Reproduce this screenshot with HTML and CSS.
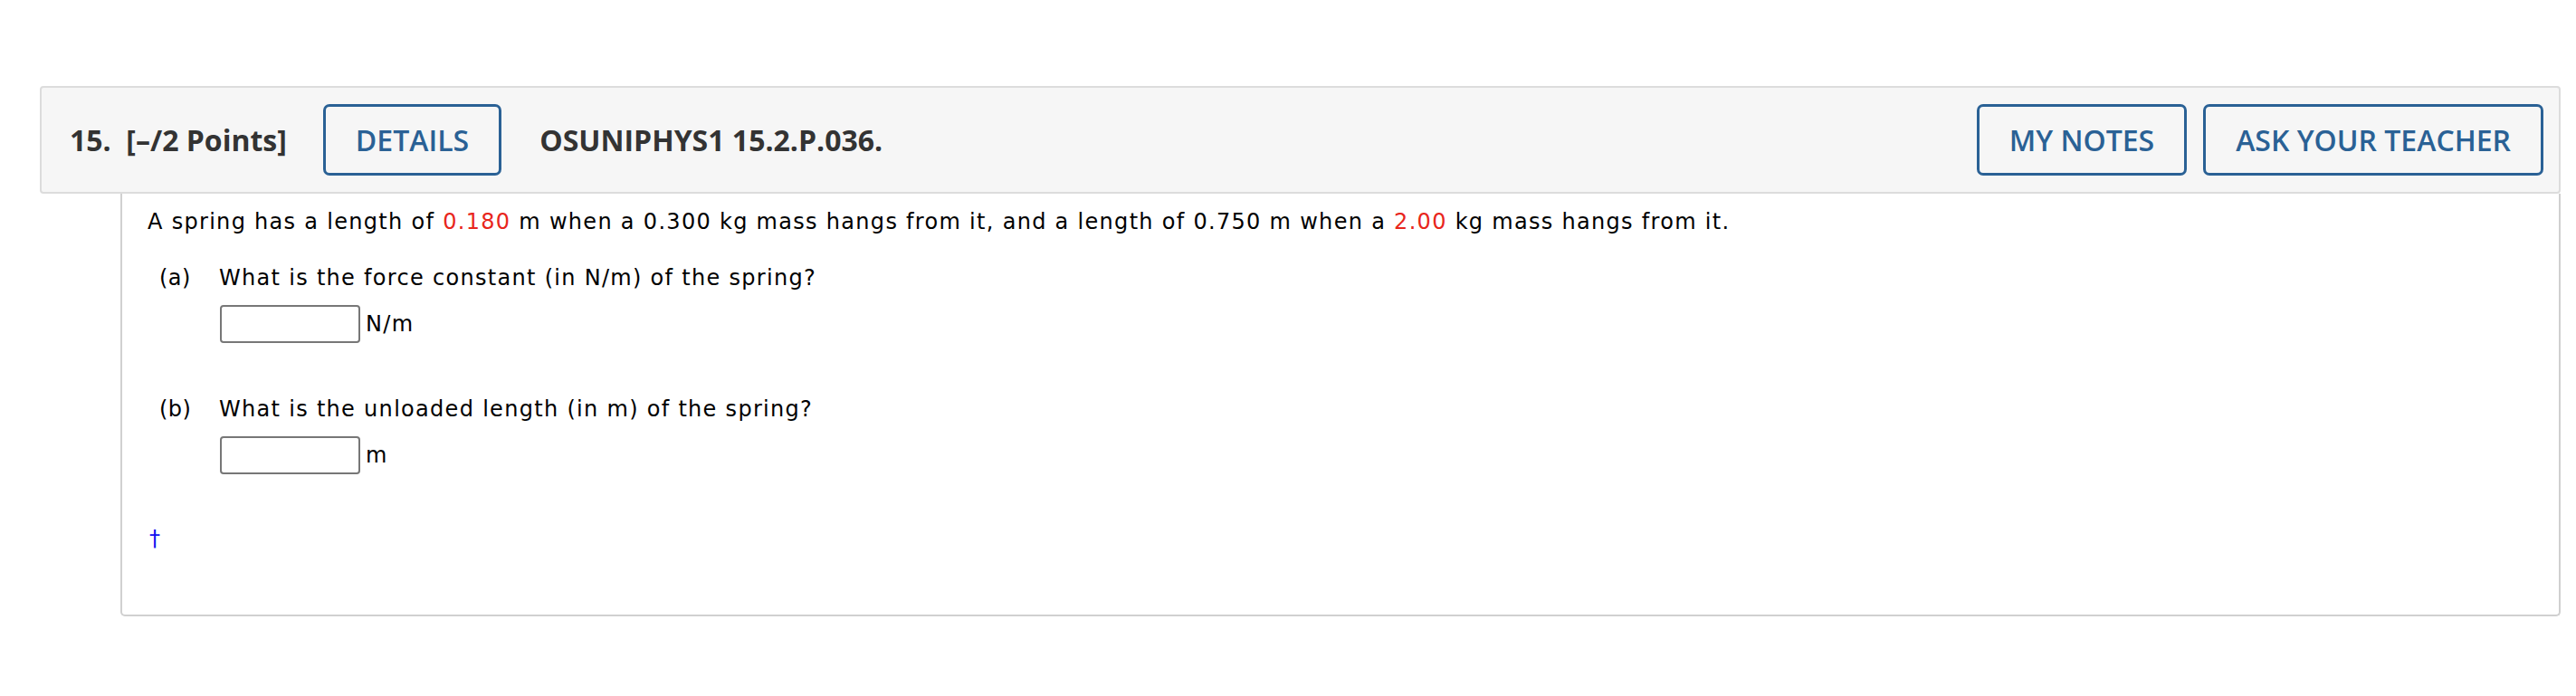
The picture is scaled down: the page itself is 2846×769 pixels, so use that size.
FILE: index.html
```html
<!DOCTYPE html>
<html>
<head>
<meta charset="utf-8">
<link rel="stylesheet" href="styles.css">
</head>
<body>
<div class="page">
  <div class="qhead">
    <div class="qnum">15.&nbsp; [–/2 Points]</div>
    <button class="btn">DETAILS</button>
    <div class="qid">OSUNIPHYS1 15.2.P.036.</div>
    <div class="spacer"></div>
    <button class="btn">MY NOTES</button>
    <button class="btn">ASK YOUR TEACHER</button>
  </div>
  <div class="qbody">
    <p class="stem">A spring has a length of <span class="red">0.180</span> m when a 0.300 kg mass hangs from it, and a length of 0.750 m when a <span class="red">2.00</span> kg mass hangs from it.</p>
    <div class="part">
      <div class="qline"><span class="lbl">(a)</span><span>What is the force constant (in N/m) of the spring?</span></div>
      <div class="ans"><span class="box"></span><span class="unit">N/m</span></div>
    </div>
    <div class="part partb">
      <div class="qline"><span class="lbl">(b)</span><span>What is the unloaded length (in m) of the spring?</span></div>
      <div class="ans"><span class="box"></span><span class="unit">m</span></div>
    </div>
    <div class="dagger">†</div>
  </div>
</div>
</body>
</html>
```
FILE: styles.css
```css
html, body { margin: 0; padding: 0; background: #fff; }
.page { padding: 95px 17px 0 44px; }
.qhead {
  box-sizing: border-box;
  height: 119px;
  background: #f6f6f6;
  border: 2px solid #dcdcdc;
  border-radius: 4px;
  display: flex;
  align-items: center;
  padding: 0 17px 0 31px;
  font-family: "Open Sans", sans-serif;
  font-size: 32px;
  font-weight: 700;
  color: #333;
}
.qnum { margin-right: 40px; }
.qid { margin-left: 42px; }
.spacer { flex: 1; }
.btn {
  box-sizing: border-box;
  height: 79px;
  padding: 0 33px;
  background: transparent;
  border: 3.5px solid #2a6195;
  border-radius: 7px;
  color: #2a6195;
  font-family: "Open Sans", sans-serif;
  font-size: 32px;
  font-weight: 600;
  margin-left: 18px;
}
.qhead .btn:first-of-type { margin-left: 0; }
.qbody {
  box-sizing: border-box;
  margin-left: 89px;
  height: 467px;
  border: 2px solid #d0d0d0;
  border-top: none;
  border-radius: 0 0 5px 5px;
  padding: 15px 28px 0 28px;
  font-family: "DejaVu Sans", Verdana, sans-serif;
  font-size: 24px;
  letter-spacing: 1.3px;
  line-height: 32px;
  color: #000;
}
.stem { margin: 0 0 30px 0; }
.red { color: #e8261c; }
.qline { display: flex; padding-left: 13px; }
.lbl { width: 66px; letter-spacing: 0.5px; }
.ans { display: flex; align-items: center; margin-top: 14px; padding-left: 80px; }
.box {
  box-sizing: border-box;
  width: 155px;
  height: 42px;
  border: 2px solid #777;
  border-radius: 4px;
  background: #fff;
}
.unit { margin-left: 6px; }
.partb { margin-top: 57px; }
.dagger { margin-top: 55px; color: #1010f0; padding-left: 2px; }
```
